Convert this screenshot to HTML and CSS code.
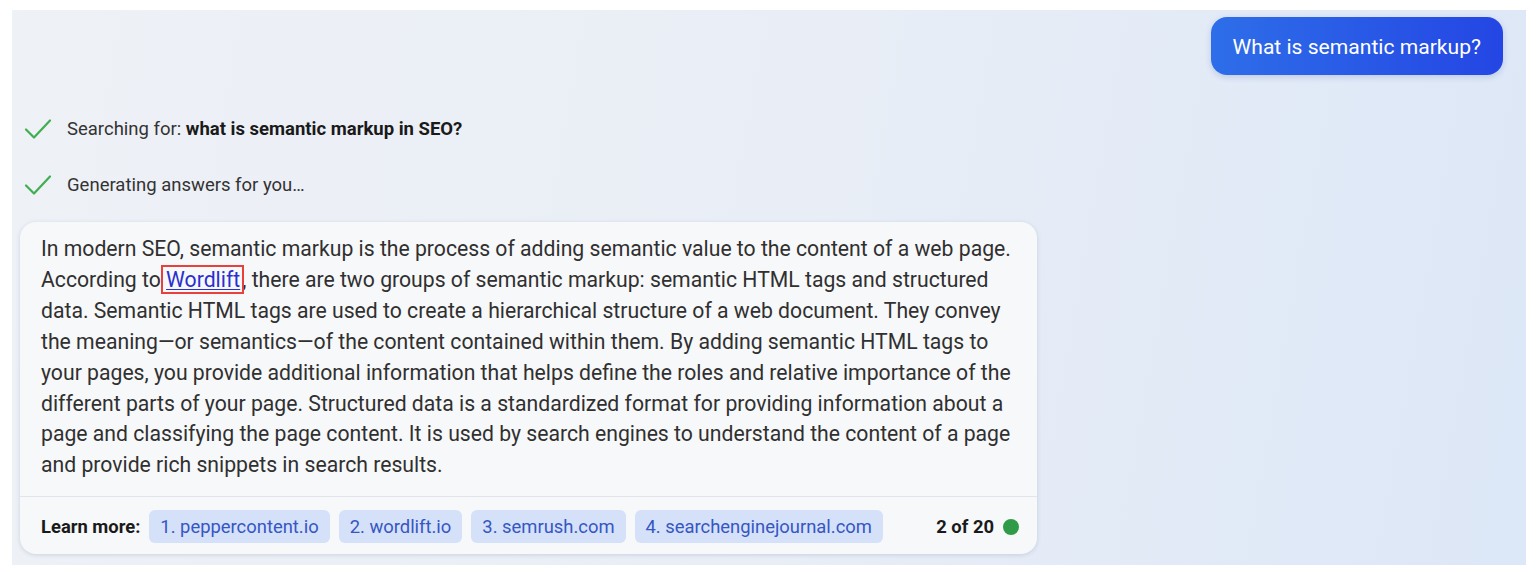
FILE: index.html
```html
<!DOCTYPE html>
<html>
<head>
<meta charset="utf-8">
<link rel="stylesheet" href="styles.css">
</head>
<body>
<div class="panel">
  <div class="user-row">
    <div class="bubble">What is semantic markup?</div>
  </div>
  <div class="steps">
    <div class="step">
      <svg class="check" viewBox="0 0 28 22" width="28" height="22"><path d="M2 11.5 L10 19.5 L26 2.5" fill="none" stroke="#3fae4f" stroke-width="2.2" stroke-linecap="round" stroke-linejoin="round"/></svg>
      <span>Searching for: <b>what is semantic markup in SEO?</b></span>
    </div>
    <div class="step">
      <svg class="check" viewBox="0 0 28 22" width="28" height="22"><path d="M2 11.5 L10 19.5 L26 2.5" fill="none" stroke="#3fae4f" stroke-width="2.2" stroke-linecap="round" stroke-linejoin="round"/></svg>
      <span>Generating answers for you…</span>
    </div>
  </div>
  <div class="card">
    <p class="answer">In modern SEO, semantic markup is the process of adding semantic value to the content of a web page.<br>According to <a class="cite">Wordlift</a>, there are two groups of semantic markup: semantic HTML tags and structured<br>data. Semantic HTML tags are used to create a hierarchical structure of a web document. They convey<br>the meaning—or semantics—of the content contained within them. By adding semantic HTML tags to<br>your pages, you provide additional information that helps define the roles and relative importance of the<br>different parts of your page. Structured data is a standardized format for providing information about a<br>page and classifying the page content. It is used by search engines to understand the content of a page<br>and provide rich snippets in search results.</p>
    <div class="footer">
      <span class="learn">Learn more:</span>
      <span class="chip">1. peppercontent.io</span>
      <span class="chip">2. wordlift.io</span>
      <span class="chip">3. semrush.com</span>
      <span class="chip">4. searchenginejournal.com</span>
      <span class="count">2 of 20</span>
      <span class="dot"></span>
    </div>
  </div>
</div>
</body>
</html>
```
FILE: styles.css
```css
html, body {
  margin: 0;
  padding: 0;
  background: #ffffff;
}
body {
  font-family: Roboto, "Liberation Sans", sans-serif;
  color: #2f2f2f;
}
.panel {
  margin: 10px 10px 0 12px;
  height: 555px;
  box-sizing: border-box;
  background: linear-gradient(100deg, #eef1f6 0%, #e9eef6 50%, #dce7f7 100%);
  padding: 7px 23px 0 8px;
  display: flex;
  flex-direction: column;
}
.user-row {
  display: flex;
  justify-content: flex-end;
}
.bubble {
  height: 58px;
  box-sizing: border-box;
  padding: 0 22px;
  display: flex;
  align-items: center;
  border-radius: 16px;
  background: linear-gradient(90deg, #2e6ee9 0%, #2446e4 100%);
  color: #ffffff;
  font-size: 21.1px;
  box-shadow: 0 2px 6px rgba(40, 70, 160, 0.2);
}
.steps {
  margin-top: 43px;
  display: flex;
  flex-direction: column;
  gap: 34px;
  padding-left: 4px;
}
.step {
  display: flex;
  align-items: center;
  height: 22px;
  gap: 15px;
  font-size: 18.5px;
  color: #333333;
}
.step b {
  color: #1a1a1a;
}
.card {
  margin-top: 26px;
  width: 1017px;
  background: #f7f8fa;
  border-radius: 16px;
  box-shadow: 0 1px 4px rgba(60, 80, 120, 0.18);
}
.answer {
  margin: 0;
  padding: 12px 10px 15px 21px;
  font-size: 21.2px;
  line-height: 30.9px;
  white-space: nowrap;
  color: #303030;
}
.cite {
  color: #2a2fd0;
  text-decoration: underline;
  text-decoration-thickness: 1px;
  text-underline-offset: 2px;
  outline: 2px solid #e8413c;
  outline-offset: 0;
  margin-left: -3px;
  padding: 0 2px 0 3px;
}
.footer {
  border-top: 1px solid #e1e4ea;
  display: flex;
  align-items: center;
  padding: 13px 18px 11px 21px;
  gap: 9px;
  font-size: 18.4px;
}
.learn {
  font-weight: 700;
  color: #1a1a1a;
  margin-right: 0;
}
.chip {
  height: 33px;
  display: flex;
  align-items: center;
  padding: 0 11px;
  background: #d4e1f8;
  border-radius: 6px;
  color: #3656c4;
}
.count {
  margin-left: auto;
  font-weight: 700;
  color: #1a1a1a;
}
.dot {
  width: 16px;
  height: 16px;
  border-radius: 50%;
  background: #2f9a48;
}
```
